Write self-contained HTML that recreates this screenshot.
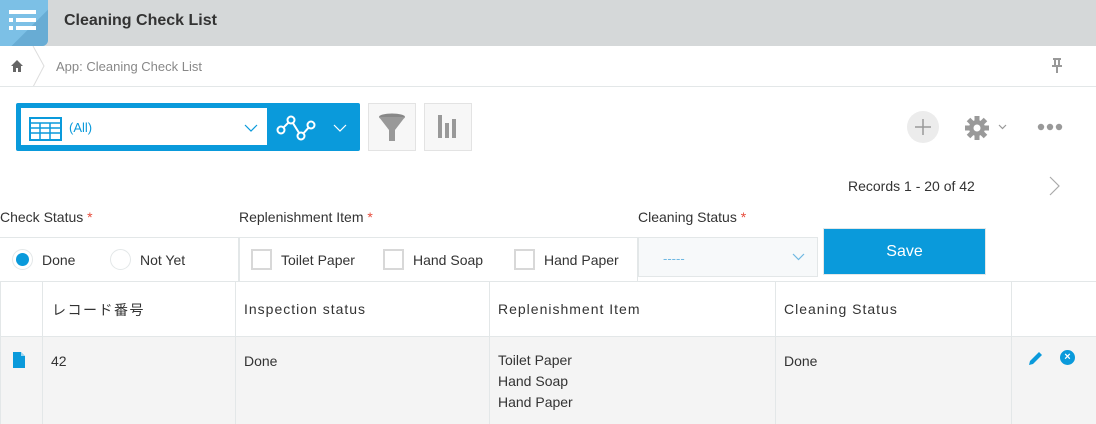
<!DOCTYPE html>
<html><head><meta charset="utf-8"><style>
*{box-sizing:border-box;margin:0;padding:0}
body{width:1096px;height:424px;overflow:hidden;background:#fff;font-family:"Liberation Sans","Noto Sans CJK JP",sans-serif;color:#333;position:relative}
.a{position:absolute}
.t{font-size:14px;color:#333}
</style></head><body>
<div class="a" style="left:0;top:0;width:1096px;height:46px;background:#d5d8d9"></div>
<div class="a" style="left:0;top:0;width:48px;height:46px;background:#7cc0e6;border-radius:0 0 6px 0;overflow:hidden">
<div class="a" style="left:20px;top:20px;width:60px;height:60px;background:#68acd4;transform:rotate(45deg)"></div>
<svg class="a" style="left:9px;top:10px" width="30" height="24"><g fill="#fff"><rect x="0" y="0" width="27" height="4"/><rect x="0" y="8" width="4" height="4"/><rect x="7" y="8" width="20" height="4"/><rect x="0" y="16" width="4" height="4"/><rect x="7" y="16" width="20" height="4"/></g></svg>
</div>
<div class="a" style="left:64px;top:12px;font-size:16px;font-weight:bold;color:#333">Cleaning Check List</div>
<svg class="a" style="left:10px;top:59px" width="14" height="14"><path d="M1 7 L7 1 L13 7 L11 7 L11 13 L8 13 L8 9 L6 9 L6 13 L3 13 L3 7Z" fill="#666"/></svg>
<svg class="a" style="left:32px;top:46px" width="14" height="41"><path d="M1 0 L12 20 L1 41" stroke="#ddd" fill="none"/></svg>
<div class="a" style="left:56px;top:59px;font-size:13px;color:#888">App: Cleaning Check List</div>
<svg class="a" style="left:1051px;top:58px" width="12" height="16"><path d="M2 1h8M4 1v6M8 1v6M1 8h10M6 8v7" stroke="#999" stroke-width="2" fill="none"/></svg>
<div class="a" style="left:0;top:86px;width:1096px;height:1px;background:#e3e7e8"></div>

<div class="a" style="left:16px;top:103px;width:344px;height:48px;background:#0a9adb;border-radius:2px"></div>
<div class="a" style="left:21px;top:108px;width:246px;height:37px;background:#fff"></div>
<svg class="a" style="left:29px;top:117px" width="33" height="24"><rect x="1" y="1" width="31" height="22" fill="none" stroke="#0a9adb" stroke-width="2"/><g stroke="#0a9adb" stroke-width="1.5"><path d="M1 6h31M1 11h31M1 16h31M11 6v17M21 6v17"/></g></svg>
<div class="a" style="left:69px;top:120px;font-size:13px;color:#0a9adb">(All)</div>
<svg class="a" style="left:244px;top:124px" width="14" height="9"><path d="M1 1l6 6 6-6" stroke="#0a9adb" fill="none" stroke-width="1.2"/></svg>
<svg class="a" style="left:276px;top:114px" width="42" height="27"><path d="M5 16L15 6L25 22L35 11" stroke="#fff" stroke-width="2" fill="none"/><g fill="#0a9adb" stroke="#fff" stroke-width="2"><circle cx="5" cy="16" r="3.5"/><circle cx="15" cy="6" r="3.5"/><circle cx="25" cy="22" r="3.5"/><circle cx="35" cy="11" r="3.5"/></g></svg>
<svg class="a" style="left:333px;top:124px" width="14" height="9"><path d="M1 1l6 6 6-6" stroke="#fff" fill="none" stroke-width="1.2"/></svg>
<div class="a" style="left:368px;top:103px;width:48px;height:48px;background:#f7f7f7;border:1px solid #e3e3e3"></div>
<svg class="a" style="left:377px;top:113px" width="30" height="29"><ellipse cx="15" cy="4" rx="13" ry="3.5" fill="#888"/><path d="M2 4 L12 17 L12 28 L18 28 L18 17 L28 4Z" fill="#999"/></svg>
<div class="a" style="left:424px;top:103px;width:48px;height:48px;background:#f7f7f7;border:1px solid #e3e3e3"></div>
<svg class="a" style="left:437px;top:115px" width="22" height="24"><g fill="#999"><rect x="1" y="0" width="4" height="23"/><rect x="8" y="8" width="4" height="15"/><rect x="15" y="4" width="4" height="19"/></g></svg>

<div class="a" style="left:907px;top:111px;width:32px;height:32px;border-radius:50%;background:#ececec"></div>
<svg class="a" style="left:913px;top:117px" width="20" height="20"><path d="M10 2v16M2 10h16" stroke="#999" stroke-width="1.5"/></svg>
<svg class="a" style="left:964px;top:115px" width="26" height="26" viewBox="0 0 26 26"><g fill="#999"><circle cx="13" cy="13" r="8"/><g><rect x="10.5" y="1" width="5" height="24"/><rect x="10.5" y="1" width="5" height="24" transform="rotate(45 13 13)"/><rect x="10.5" y="1" width="5" height="24" transform="rotate(90 13 13)"/><rect x="10.5" y="1" width="5" height="24" transform="rotate(135 13 13)"/></g></g><circle cx="13" cy="13" r="3.5" fill="#fff"/></svg>
<svg class="a" style="left:998px;top:124px" width="9" height="6"><path d="M1 1l3.5 3.5L8 1" stroke="#999" fill="none" stroke-width="1.2"/></svg>
<svg class="a" style="left:1037px;top:123px" width="26" height="8"><g fill="#999"><circle cx="4" cy="4" r="3.2"/><circle cx="13" cy="4" r="3.2"/><circle cx="22" cy="4" r="3.2"/></g></svg>

<div class="a" style="left:848px;top:178px;font-size:14px;color:#333">Records 1 - 20 of 42</div>
<svg class="a" style="left:1049px;top:176px" width="12" height="20"><path d="M1 1l9 9-9 9" stroke="#aaa" fill="none" stroke-width="1.2"/></svg>

<div class="a t" style="left:0;top:209px">Check Status <span style="color:#e74c3c">*</span></div>
<div class="a t" style="left:239px;top:209px">Replenishment Item <span style="color:#e74c3c">*</span></div>
<div class="a t" style="left:638px;top:209px">Cleaning Status <span style="color:#e74c3c">*</span></div>

<div class="a" style="left:0;top:237px;width:239px;height:45px;border-top:1px solid #e3e7e8;border-right:1px solid #e3e7e8"></div>
<div class="a" style="left:12px;top:249px;width:21px;height:21px;border-radius:50%;border:1px solid #e3e7e8;background:#fff"></div>
<div class="a" style="left:16px;top:253px;width:13px;height:13px;border-radius:50%;background:#0a9adb"></div>
<div class="a t" style="left:42px;top:252px">Done</div>
<div class="a" style="left:110px;top:249px;width:21px;height:21px;border-radius:50%;border:1px solid #e3e7e8;background:#fff"></div>
<div class="a t" style="left:140px;top:252px">Not Yet</div>
<div class="a" style="left:239px;top:237px;width:399px;height:45px;border:1px solid #e3e7e8;border-bottom:none"></div>
<div class="a" style="left:251px;top:249px;width:21px;height:21px;border:2px solid #d8d8d8"></div>
<div class="a t" style="left:281px;top:252px">Toilet Paper</div>
<div class="a" style="left:383px;top:249px;width:21px;height:21px;border:2px solid #d8d8d8"></div>
<div class="a t" style="left:413px;top:252px">Hand Soap</div>
<div class="a" style="left:514px;top:249px;width:21px;height:21px;border:2px solid #d8d8d8"></div>
<div class="a t" style="left:544px;top:252px">Hand Paper</div>
<div class="a" style="left:638px;top:237px;width:180px;height:40px;background:#f7f9fa;border:1px solid #e3e7e8"></div>
<div class="a" style="left:663px;top:251px;font-size:13px;color:#6fb8e2">-----</div>
<svg class="a" style="left:792px;top:253px" width="13" height="8"><path d="M1 1l5.5 5.5L12 1" stroke="#6fb8e2" fill="none" stroke-width="1.2"/></svg>
<div class="a" style="left:823px;top:228px;width:163px;height:47px;background:#0a9adb;border:1px solid #e3e7e8;color:#fff;font-size:16px;text-align:center;line-height:45px">Save</div>

<div class="a" style="left:0;top:281px;width:1096px;height:1px;background:#e3e7e8"></div>
<div class="a" style="left:0;top:336px;width:1096px;height:88px;background:#f4f4f4;border-top:1px solid #e3e7e8"></div>
<div class="a" style="left:0;top:282px;width:1px;height:142px;background:#e3e7e8"></div>
<div class="a" style="left:42px;top:282px;width:1px;height:142px;background:#e3e7e8"></div>
<div class="a" style="left:235px;top:282px;width:1px;height:142px;background:#e3e7e8"></div>
<div class="a" style="left:489px;top:282px;width:1px;height:142px;background:#e3e7e8"></div>
<div class="a" style="left:775px;top:282px;width:1px;height:142px;background:#e3e7e8"></div>
<div class="a" style="left:1011px;top:282px;width:1px;height:142px;background:#e3e7e8"></div>
<div class="a t" style="left:52px;top:300px;letter-spacing:1.5px">レコード番号</div>
<div class="a t" style="left:244px;top:301px;letter-spacing:1px">Inspection status</div>
<div class="a t" style="left:498px;top:301px;letter-spacing:1px">Replenishment Item</div>
<div class="a t" style="left:784px;top:301px;letter-spacing:1px">Cleaning Status</div>
<svg class="a" style="left:13px;top:352px" width="12" height="16"><path d="M0 0h8l4 4v12H0Z" fill="#0a9adb"/><path d="M8 0v4h4" fill="#fff" opacity=".6"/></svg>
<div class="a t" style="left:51px;top:353px">42</div>
<div class="a t" style="left:244px;top:353px">Done</div>
<div class="a t" style="left:498px;top:350px;line-height:21px">Toilet Paper<br>Hand Soap<br>Hand Paper</div>
<div class="a t" style="left:784px;top:353px">Done</div>
<svg class="a" style="left:1027px;top:350px" width="17" height="17"><path d="M2 15l1-4 9-9 3 3-9 9Z" fill="#0a9adb"/></svg>
<div class="a" style="left:1060px;top:350px;width:15px;height:15px;border-radius:50%;background:#0a9adb;color:#fff;font-size:11px;line-height:15px;text-align:center;font-weight:bold">×</div>
</body></html>
